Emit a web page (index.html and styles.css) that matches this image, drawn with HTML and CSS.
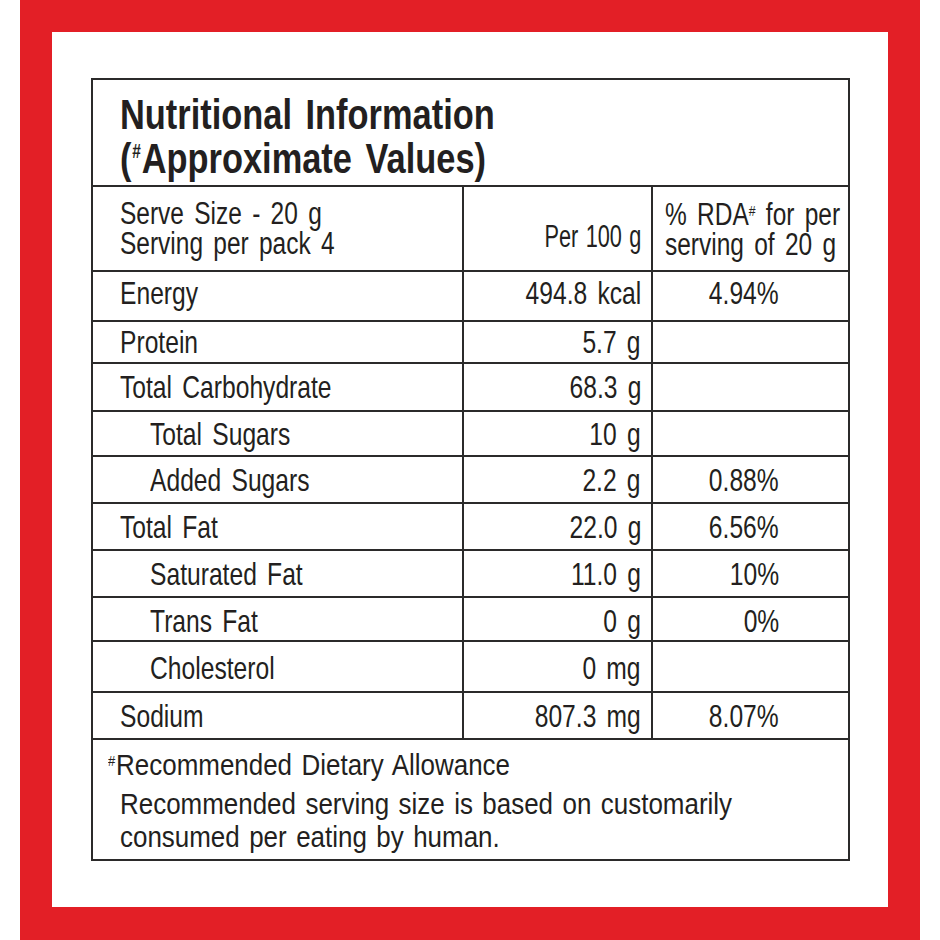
FILE: index.html
```html
<!DOCTYPE html>
<html>
<head>
<meta charset="utf-8">
<link rel="stylesheet" href="styles.css">
</head>
<body>
<div class="page">
  <div class="frame">
    <div class="card">
      <table class="nutri">
        <colgroup>
          <col class="c1"><col class="c2"><col class="c3">
        </colgroup>
        <tr class="title-row">
          <td colspan="3" class="title">
            <span class="tl">Nutritional Information</span>
            <span class="tl">(<sup>#</sup>Approximate Values)</span>
          </td>
        </tr>
        <tr class="head-row">
          <td class="head-l">
            <span class="hl">Serve Size - 20 g</span>
            <span class="hl">Serving per pack 4</span>
          </td>
          <td class="num head-m"><span class="t">Per 100 g</span></td>
          <td class="head-r">
            <span class="hl">% RDA<sup>#</sup> for per</span>
            <span class="hl">serving of 20 g</span>
          </td>
        </tr>
        <tr class="r-energy"><td class="label"><span class="t">Energy</span></td><td class="num"><span class="t">494.8 kcal</span></td><td class="pct"><span class="t">4.94%</span></td></tr>
        <tr class="r-protein"><td class="label"><span class="t">Protein</span></td><td class="num"><span class="t">5.7 g</span></td><td class="pct"></td></tr>
        <tr class="r-carb"><td class="label"><span class="t">Total Carbohydrate</span></td><td class="num"><span class="t">68.3 g</span></td><td class="pct"></td></tr>
        <tr class="r-sugar"><td class="label sub"><span class="t">Total Sugars</span></td><td class="num"><span class="t">10 g</span></td><td class="pct"></td></tr>
        <tr class="r-added"><td class="label sub"><span class="t">Added Sugars</span></td><td class="num"><span class="t">2.2 g</span></td><td class="pct"><span class="t">0.88%</span></td></tr>
        <tr class="r-fat"><td class="label"><span class="t">Total Fat</span></td><td class="num"><span class="t">22.0 g</span></td><td class="pct"><span class="t">6.56%</span></td></tr>
        <tr class="r-sat"><td class="label sub"><span class="t">Saturated Fat</span></td><td class="num"><span class="t">11.0 g</span></td><td class="pct"><span class="t">10%</span></td></tr>
        <tr class="r-trans"><td class="label sub"><span class="t">Trans Fat</span></td><td class="num"><span class="t">0 g</span></td><td class="pct"><span class="t">0%</span></td></tr>
        <tr class="r-chol"><td class="label sub"><span class="t">Cholesterol</span></td><td class="num"><span class="t">0 mg</span></td><td class="pct"></td></tr>
        <tr class="r-sodium"><td class="label"><span class="t">Sodium</span></td><td class="num"><span class="t">807.3 mg</span></td><td class="pct"><span class="t">8.07%</span></td></tr>
        <tr class="foot-row">
          <td colspan="3" class="foot">
            <span class="fl fl-a"><sup>#</sup>Recommended Dietary Allowance</span>
            <span class="fl fl-b">Recommended serving size is based on customarily</span>
            <span class="fl">consumed per eating by human.</span>
          </td>
        </tr>
      </table>
    </div>
  </div>
</div>
</body>
</html>
```
FILE: styles.css
```css
html, body {
  margin: 0;
  padding: 0;
  background: #ffffff;
}
.page {
  width: 940px;
  height: 940px;
  padding: 0 20px;
  box-sizing: border-box;
  background: #ffffff;
}
.frame {
  height: 940px;
  background: #e31f26;
  padding: 32px 32px 33px 32px;
  box-sizing: border-box;
}
.card {
  height: 100%;
  background: #ffffff;
  box-sizing: border-box;
  padding: 46px 0 0 39px;
}
.nutri {
  border-collapse: collapse;
  table-layout: fixed;
  width: 757px;
  font-family: "Liberation Sans", Arial, sans-serif;
  color: #231f20;
  font-size: 32px;
}
.c1 { width: 371px; }
.c2 { width: 189px; }
.c3 { width: 197px; }
.nutri td {
  border: 2px solid #2b2a2a;
  padding: 0;
  vertical-align: middle;
  line-height: 1;
  overflow: visible;
}

/* condensed text */
.t, .hl, .tl, .fl {
  white-space: nowrap;
  transform-origin: left center;
}
.t {
  display: inline-block;
  transform: scaleX(0.77);
  word-spacing: 4.4px;
}
.num .t, .pct .t { transform-origin: right center; }
.hl {
  display: block;
  font-size: 31px;
  transform: scaleX(0.79);
  word-spacing: 4.4px;
  line-height: 30px;
}
.tl {
  display: block;
  font-weight: bold;
  font-size: 43px;
  line-height: 44px;
  transform: scaleX(0.8);
  word-spacing: 5px;
}
.fl {
  display: block;
  font-size: 30px;
  line-height: 33px;
  transform: scaleX(0.865);
  word-spacing: 2.6px;
}
sup {
  font-size: 0.5em;
  vertical-align: top;
  line-height: 1;
  position: relative;
  top: 3px;
}
.tl sup { top: 6px; margin: 0 1px; font-size: 0.45em; }
.fl sup { top: 3px; margin-right: 1px; }

.title {
  vertical-align: top !important;
  padding: 12px 0 0 27px !important;
}
.label { padding-left: 27px !important; }
.label.sub { padding-left: 57px !important; }
.num { text-align: right; padding-right: 10px !important; }
.pct { text-align: right; padding-right: 69px !important; }
.head-l { vertical-align: top !important; padding: 12px 0 0 27px !important; }
.head-m { vertical-align: bottom !important; padding-bottom: 18px !important; font-size: 31px; }
.head-m .t { transform: scaleX(0.7); word-spacing: 2px; }
.head-r { vertical-align: top !important; padding: 13px 0 0 12px !important; }

.title-row { height: 107px; }
.head-row { height: 85px; }
.r-energy { height: 50px; }
.r-energy td { padding-bottom: 6px; }
.r-protein { height: 42px; }
.r-carb { height: 48px; }
.r-sugar { height: 45px; }
.r-added { height: 47px; }
.r-fat { height: 47px; }
.r-sat { height: 47px; }
.r-trans { height: 44px; }
.r-trans td { padding-top: 4px; }
.r-chol { height: 51px; }
.r-chol td { padding-top: 3px; }
.r-sodium { height: 47px; }
.foot-row { height: 121px; }
.foot {
  vertical-align: top !important;
  padding: 10px 0 0 27px !important;
}
.fl-a { line-height: 30px; margin-left: -12px; margin-bottom: 7px; }
```
